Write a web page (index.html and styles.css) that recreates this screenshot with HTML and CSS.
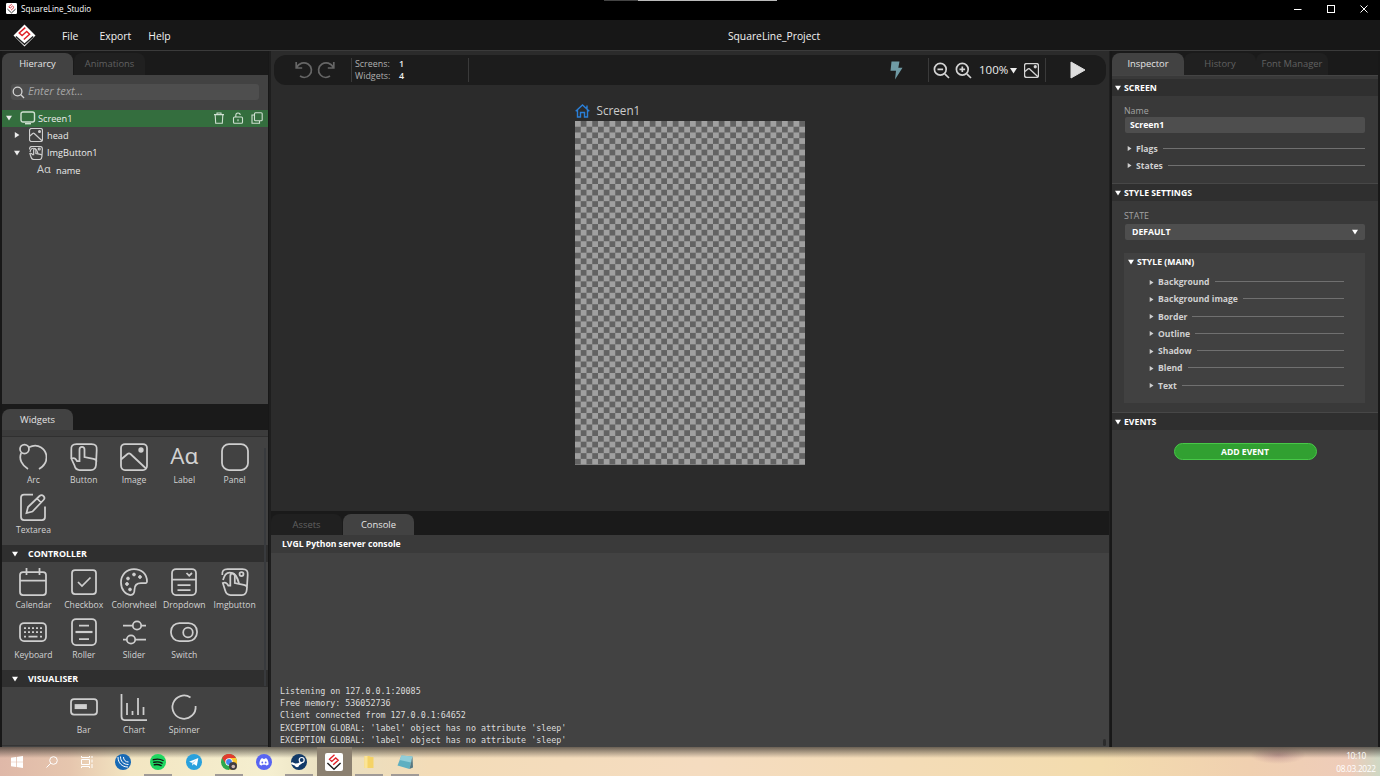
FILE: index.html
```html
<!DOCTYPE html>
<html lang="en">
<head>
  <meta charset="UTF-8" />
  <title>SquareLine_Studio</title>
  <link rel="stylesheet" href="styles.css">
</head>
<body>
  <!-- Shared icons -->
  <svg class="sprite">
    <symbol id="logo" viewBox="0 0 24 24">
      <path d="M12 .5 23.5 12 12 23.5.5 12z" fill="#fff"/>
      <path d="M3 13 12 21.200 21 13" fill="none" stroke="#222" stroke-width="1.500"/>
      <path d="M12.800 3.800 6.500 9.300l3 2.800 4.800-4.300 3 2.800-6 5.500" fill="none" stroke="#e01f26" stroke-width="1.500"/>
    </symbol>
    <symbol id="app" viewBox="0 0 18 18">
      <rect width="18" height="18" rx="2" fill="#fff"/>
      <path d="M2.400 10 9 16.200 15.600 10" fill="none" stroke="#222" stroke-width="1.500"/>
      <path d="M9.500 1.800 4.500 6.200l2.300 2.200 3.900-3.500L13.200 7.200 8.200 11.800" fill="none" stroke="#e01f26" stroke-width="1.400"/>
    </symbol>
    <symbol id="image" viewBox="0 0 28 28">
      <rect x="1" y="1" width="26" height="26" rx="4"/>
      <path d="M1 16.500 7.500 11c1-.8 2-.8 3 0L26 25.500"/>
      <circle cx="21" cy="7" r="1.800" fill="currentColor"/>
    </symbol>
    <symbol id="button" viewBox="0 0 28 28">
      <path d="M1.300 15V7c-.4-4 1.200-6 5.200-6h15c4 0 5.600 2 5.200 6l-.7 15c-.3 3.500-1.700 5-5.200 5H9.500c-3 0-4.300-1.500-5-4.500L1.300 15.500c2.200-1 4.200-.5 5.700 2.500H9.500V6.500c0-3.500 5-3.500 5 0V14l9 1.800c2 .5 3 1 3 2.700"/>
    </symbol>
    <symbol id="imgbutton" viewBox="0 0 28 28">
      <path d="M1.300 7c-.4-4 1.200-6 5.200-6h15c4 0 5.600 2 5.200 6l-.9 14.500c-.3 3.800-1.500 5.500-5 5.500H9.500c-3 0-4.500-1.500-5.300-4.500L1.800 15c2-1 4-.5 5.500 2.500h2V8c0-3.500 4.500-3.500 4.500 0v7l9 1.800c2.500.5 3.300 1 3.300 3"/>
      <path d="M2 12C3 8 5 4.500 8.500 4.500c6 0 8 5 9.500 11"/>
      <circle cx="20.500" cy="6" r="2"/>
    </symbol>
    <symbol id="down" viewBox="0 0 6 6"><path d="M0 .8h6L3 5.600z" fill="currentColor" stroke="none"/></symbol>
    <symbol id="right" viewBox="0 0 6 6"><path d="M.8 0v6L5.400 3z" fill="currentColor" stroke="none"/></symbol>
  </svg>

  <div class="titlebar">
    <svg class="title-logo"><use href="#app"/></svg>
    <span class="title-text">SquareLine_Studio</span>
    <div class="top-strip"></div>
    <div class="window-buttons">
      <svg viewBox="0 0 8 8"><path d="M0 4.500h7.500"/></svg>
      <svg viewBox="0 0 8 8"><rect x=".5" y=".5" width="7" height="7"/></svg>
      <svg viewBox="0 0 8 8"><path d="m.5.5 7 7m0-7-7 7"/></svg>
    </div>
  </div>

  <div class="menubar">
    <svg class="menu-logo"><use href="#logo"/></svg>
    <span class="menu-item file">File</span>
    <span class="menu-item export">Export</span>
    <span class="menu-item">Help</span>
    <span class="project-name">SquareLine_Project</span>
  </div>

  <div class="main">
    <!-- Left column -->
    <div class="left">
      <div class="tabs">
        <div class="tab active">Hierarcy</div>
        <div class="tab">Animations</div>
      </div>
      <div class="panel hierarchy">
        <div class="search">
          <svg class="icon" viewBox="0 0 14 14"><circle cx="6" cy="6" r="4.700"/><path d="m9.500 9.500 3.500 3.500"/></svg>
          <span>Enter text...</span>
        </div>
        <div class="tree">
          <div class="node selected">
            <svg class="arrow"><use href="#down"/></svg>
            <svg class="icon screen-icon" viewBox="0 0 16 14"><rect x="1" y="1" width="13.500" height="10" rx="2"/><path d="M5 12.700h6"/></svg>
            <span>Screen1</span>
            <div class="node-actions">
              <svg viewBox="0 0 12 12"><path d="M1 2.600h10M4 2.500V1h4v1.500M2.200 3l.5 8.200h6.600L9.800 3"/></svg>
              <svg viewBox="0 0 12 12"><rect x="1.500" y="5" width="9" height="6.300" rx="1"/><path d="M3.800 5V3.300c0-3 4.400-3 4.400-.3M6 7.300v2"/></svg>
              <svg viewBox="0 0 12 12"><rect x="3.500" y=".8" width="7.700" height="8" rx="1"/><path d="M3.500 3H1v8.200h7.500V9"/></svg>
            </div>
          </div>
          <div class="node level-1">
            <svg class="arrow"><use href="#right"/></svg>
            <svg class="icon node-icon"><use href="#image"/></svg>
            <span>head</span>
          </div>
          <div class="node level-1">
            <svg class="arrow"><use href="#down"/></svg>
            <svg class="icon node-icon"><use href="#imgbutton"/></svg>
            <span>ImgButton1</span>
          </div>
          <div class="node level-2">
            <span class="node-letters">Aɑ</span>
            <span>name</span>
          </div>
        </div>
      </div>

      <div class="tabs lower-tabs">
        <div class="tab active">Widgets</div>
      </div>
      <div class="panel widgets">
        <div class="widgets-top"></div>
        <div class="widget-grid">
          <div class="widget">
            <svg viewBox="0 0 28 28"><circle cx="5.500" cy="6" r="4.500"/><path d="M10 4.300C19-.5 27.500 6 27.500 14.500c0 5-2.500 8.500-7.500 11.500M2.200 10C-.5 16 3 22.500 9 26"/></svg>
            <span>Arc</span>
          </div>
          <div class="widget"><svg><use href="#button"/></svg><span>Button</span></div>
          <div class="widget"><svg><use href="#image"/></svg><span>Image</span></div>
          <div class="widget"><div class="letters">Aɑ</div><span>Label</span></div>
          <div class="widget">
            <svg viewBox="0 0 28 28"><rect x="1" y="1" width="26" height="26" rx="7"/></svg>
            <span>Panel</span>
          </div>
          <div class="widget">
            <svg viewBox="0 0 28 28"><path d="M14 1.500H5c-2 0-3 1-3 3V24c0 2 1 3 3 3h18c2 0 3-1 3-3V13.500M7.500 20l1.500-6L20.500 3c3-2.500 6.500 1.500 4 4L13.500 18.500zM18 5.500l4.500 4.500"/></svg>
            <span>Textarea</span>
          </div>
        </div>
        <div class="group-title"><svg class="arrow"><use href="#down"/></svg>CONTROLLER</div>
        <div class="widget-grid">
          <div class="widget">
            <svg viewBox="0 0 28 28"><rect x="1" y="4" width="26" height="23" rx="3"/><path d="M1 12.500h26M7.500 0v7M20.500 0v7"/></svg>
            <span>Calendar</span>
          </div>
          <div class="widget">
            <svg viewBox="0 0 28 28"><rect x="2" y="2" width="24" height="24" rx="3"/><path d="m8 14 4 4 8.500-8.500"/></svg>
            <span>Checkbox</span>
          </div>
          <div class="widget">
            <svg viewBox="0 0 28 28"><path d="M27 13.500C27 6 21.500 1 14 1S1 7 1 14.500 6 27 10.500 27c3.500 0 4-3 4-5.500 0-4 2.500-6.500 6.500-6.500 3 0 6 1 6-1.500z"/><g fill="currentColor" stroke-width="1"><circle cx="8" cy="10.500" r="1.400"/><circle cx="14" cy="6.500" r="1.400"/><circle cx="20" cy="9" r="1.400"/><circle cx="7" cy="16" r="1.400"/><circle cx="10" cy="21.500" r="1.400"/></g></svg>
            <span>Colorwheel</span>
          </div>
          <div class="widget">
            <svg viewBox="0 0 28 28"><rect x="2" y="1" width="24" height="26" rx="4"/><path d="M2 11.500h24M16.500 5l2.700 2.700L22 5M7.500 17h13M7.500 22h13"/></svg>
            <span>Dropdown</span>
          </div>
          <div class="widget"><svg><use href="#imgbutton"/></svg><span>Imgbutton</span></div>
          <div class="widget">
            <svg viewBox="0 0 28 28"><rect x="1" y="5" width="26" height="18" rx="4"/><path d="M5 10h18M5 14h18" stroke-dasharray="2 2"/><path d="M5 18.500h2M21 18.500h2M9.500 18.500h9"/></svg>
            <span>Keyboard</span>
          </div>
          <div class="widget">
            <svg viewBox="0 0 28 28"><rect x="2" y="1" width="24" height="26" rx="4"/><path d="M9 7.500h10M9 21h10"/><path d="M5.500 14h17" stroke-width="2.200"/></svg>
            <span>Roller</span>
          </div>
          <div class="widget">
            <svg viewBox="0 0 28 28"><circle cx="17" cy="7.500" r="4.200"/><circle cx="11" cy="21.500" r="4.200"/><path d="M3 7.500h9.800M21.200 7.500H26M3 21.500h3.800M15.200 21.500H26"/></svg>
            <span>Slider</span>
          </div>
          <div class="widget">
            <svg viewBox="0 0 28 28"><rect x="1" y="5" width="26" height="18" rx="8.500"/><circle cx="18" cy="14.500" r="4.800"/></svg>
            <span>Switch</span>
          </div>
        </div>
        <div class="group-title"><svg class="arrow"><use href="#down"/></svg>VISUALISER</div>
        <div class="widget-grid last">
          <div class="widget col-2">
            <svg viewBox="0 0 28 28"><rect x="1" y="6" width="26" height="15.500" rx="3"/><rect x="5.500" y="12" width="10.500" height="3.200" fill="currentColor"/></svg>
            <span>Bar</span>
          </div>
          <div class="widget">
            <svg viewBox="0 0 28 28"><path d="M1.500 1v22.500c0 2.500 1 3.500 3 3.500H27M7 10v12M12.500 18v4M18 5v17M23.500 14v8"/></svg>
            <span>Chart</span>
          </div>
          <div class="widget">
            <svg viewBox="0 0 28 28"><path d="M20.500 4.500A11.600 11.600 0 1 0 25.600 13"/></svg>
            <span>Spinner</span>
          </div>
        </div>
        <div class="scroll"></div>
      </div>
    </div>

    <!-- Workspace -->
    <div class="center">
      <div class="workspace">
        <div class="toolbar">
          <svg class="undo" viewBox="0 0 18 18"><path d="M1.200 1v6h6M1.500 6.500C4 2 9 .5 13 3c4 2.500 4.500 8 1.500 11-2.500 2.700-6.500 3-9.500 1"/></svg>
          <svg class="undo" viewBox="0 0 18 18"><path d="M16.800 1v6h-6M16.500 6.500C14 2 9 .5 5 3 1 5.500.5 11 3.500 14c2.500 2.700 6.500 3 9.500 1"/></svg>
          <div class="stats">
            <span>Screens:</span><b>1</b>
            <span>Widgets:</span><b>4</b>
          </div>
          <div class="toolbar-right">
            <svg class="bolt" viewBox="0 0 13 19"><path d="M1.500.5h8L8.300 6.700h4.200L5 18.500l1-8.700H.5z"/></svg>
            <div class="zoom-tools">
              <svg viewBox="0 0 17 17"><circle cx="7.300" cy="7.300" r="5.900"/><path d="m11.800 11.800 4.200 4.200M4.500 7.300h5.600"/></svg>
              <svg viewBox="0 0 17 17"><circle cx="7.300" cy="7.300" r="5.900"/><path d="m11.800 11.800 4.200 4.200M4.500 7.300h5.600M7.300 4.500v5.600"/></svg>
              <span class="percent">100%</span>
              <svg class="zoom-arrow"><use href="#down"/></svg>
              <svg class="fit icon"><use href="#image"/></svg>
            </div>
            <svg class="play" viewBox="0 0 16 18"><path d="M1 1v16l14-8z"/></svg>
          </div>
        </div>
        <div class="screen">
          <div class="screen-title">
            <svg viewBox="0 0 15 14"><path d="M.7 7.200 7.500 1l6.800 6.200M2.500 6v7h3V8.500h4V13h3V6M12 4.500V1.500"/></svg>
            <span>Screen1</span>
          </div>
          <div class="canvas"></div>
        </div>
      </div>
      <div class="tabs console-tabs">
        <div class="tab">Assets</div>
        <div class="tab active">Console</div>
      </div>
      <div class="console-title">LVGL Python server console</div>
      <div class="console">
        <div>Listening on 127.0.0.1:20085</div>
        <div>Free memory: 536052736</div>
        <div>Client connected from 127.0.0.1:64652</div>
        <div>EXCEPTION GLOBAL: 'label' object has no attribute 'sleep'</div>
        <div>EXCEPTION GLOBAL: 'label' object has no attribute 'sleep'</div>
        <div class="console-grip"></div>
      </div>
    </div>

    <!-- Inspector -->
    <div class="inspector">
      <div class="tabs">
        <div class="tab active">Inspector</div>
        <div class="tab">History</div>
        <div class="tab">Font Manager</div>
      </div>
      <div class="inspector-body">
        <div class="section-title first"><svg class="arrow"><use href="#down"/></svg>SCREEN</div>
        <div class="section screen-section">
          <label>Name</label>
          <div class="field">Screen1</div>
          <div class="fold"><svg class="arrow"><use href="#right"/></svg>Flags<i></i></div>
          <div class="fold"><svg class="arrow"><use href="#right"/></svg>States<i></i></div>
        </div>
        <div class="section-title"><svg class="arrow"><use href="#down"/></svg>STYLE SETTINGS</div>
        <div class="section style-section">
          <label>STATE</label>
          <div class="field select">DEFAULT<svg class="arrow"><use href="#down"/></svg></div>
          <div class="style-box">
            <div class="style-title"><svg class="arrow"><use href="#down"/></svg>STYLE (MAIN)</div>
            <div class="fold"><svg class="arrow"><use href="#right"/></svg>Background<i></i></div>
            <div class="fold"><svg class="arrow"><use href="#right"/></svg>Background image<i></i></div>
            <div class="fold"><svg class="arrow"><use href="#right"/></svg>Border<i></i></div>
            <div class="fold"><svg class="arrow"><use href="#right"/></svg>Outline<i></i></div>
            <div class="fold"><svg class="arrow"><use href="#right"/></svg>Shadow<i></i></div>
            <div class="fold"><svg class="arrow"><use href="#right"/></svg>Blend<i></i></div>
            <div class="fold"><svg class="arrow"><use href="#right"/></svg>Text<i></i></div>
          </div>
        </div>
        <div class="section-title"><svg class="arrow"><use href="#down"/></svg>EVENTS</div>
        <button class="add-event">ADD EVENT</button>
      </div>
    </div>
  </div>

  <div class="taskbar">
    <div class="task"><svg class="windows" viewBox="0 0 12 12"><path d="M0 1.700 5 1v4.700H0zM5.700.9 12 0v5.700H5.700zM0 6.300h5V11l-5-.7zM5.700 6.300H12V12l-6.300-.9z" fill="#fff"/></svg></div>
    <div class="task"><svg class="line" viewBox="0 0 12 12"><circle cx="7.500" cy="4.500" r="3.800"/><path d="M4.700 7.300.5 11.500"/></svg></div>
    <div class="task"><svg class="line" viewBox="0 0 12 12"><path d="M.5 0v1.500h8V0M.5 12v-1.500h8V12M.5 3.500h8v5h-8zM11 0v2M11 3.500v3M11 8v4"/></svg></div>
    <div class="task">
      <svg viewBox="0 0 16 16"><circle cx="8" cy="8" r="8" fill="#1769b5"/><path d="M3 3c0 6 4 10 10 10M5.500 2.500c0 5 3 8 8 8M8.500 3c0 3 2 5 5 5" fill="none" stroke="#fff" stroke-width="1"/></svg>
    </div>
    <div class="task open">
      <svg viewBox="0 0 16 16"><circle cx="8" cy="8" r="8" fill="#1ed760"/><path d="M3.300 5.700c3.500-1 7-.7 9.800.8M3.800 8.300c3-.8 6-.5 8.300.8M4.300 10.800c2.500-.6 4.700-.4 6.800.8" fill="none" stroke="#111" stroke-width="1.400" stroke-linecap="round"/></svg>
    </div>
    <div class="task">
      <svg viewBox="0 0 16 16"><circle cx="8" cy="8" r="8" fill="#2aa1dd"/><path d="m3 7.800 9.300-3.700-1.500 8-3-2.200-1.500 1.500-.4-2.600z" fill="#fff"/><path d="m5.900 8.800 4.600-3-3.300 3.700-.9 1.800z" fill="#b5d8ee"/></svg>
    </div>
    <div class="task open">
      <svg viewBox="0 0 16 16"><circle cx="8" cy="8" r="8" fill="#2da94f"/><path d="M1 4a8 8 0 0 1 14 0z" fill="#e33b2e"/><path d="M1 4 5 10l3-6z" fill="#e33b2e"/><path d="M8 4h7a8 8 0 0 1-7 12l3.500-6z" fill="#fcc934"/><circle cx="8" cy="8" r="3.700" fill="#fff"/><circle cx="8" cy="8" r="2.900" fill="#4285f4"/><circle cx="12" cy="12" r="4" fill="#413d42"/><circle cx="12.300" cy="12.500" r="1.800" fill="#cdb8b3"/></svg>
    </div>
    <div class="task">
      <svg viewBox="0 0 16 16"><circle cx="8" cy="8" r="8" fill="#5865f2"/><path d="M5.200 4.500 7 4.200l.4.700h1.200l.4-.7 1.800.3c1.300 1.700 1.900 3.700 1.700 5.900-.8.700-1.600 1-2.300 1.200l-.6-.9H6.400l-.6.900c-.8-.2-1.600-.6-2.300-1.200-.2-2.200.4-4.200 1.700-5.900z" fill="#fff"/><circle cx="6.300" cy="8.500" r=".9" fill="#5865f2"/><circle cx="9.700" cy="8.500" r=".9" fill="#5865f2"/></svg>
    </div>
    <div class="task open">
      <svg viewBox="0 0 16 16"><circle cx="8" cy="8" r="8" fill="#123a68"/><path d="M.3 9 6 11.500l4.500-3.300" fill="none" stroke="#fff" stroke-width="2.300"/><circle cx="6" cy="11.300" r="2" fill="#fff"/><circle cx="10.700" cy="6" r="2.500" fill="#123a68" stroke="#fff" stroke-width="1.200"/></svg>
    </div>
    <div class="task current"><svg class="app-icon"><use href="#app"/></svg></div>
    <div class="task open"><svg viewBox="0 0 16 16"><path d="M3.500 2h5l1 1h3v11h-9z" fill="#f5d366"/><path d="M3.500 2h3v12h-3z" fill="#fbe497"/></svg></div>
    <div class="task open"><svg viewBox="0 0 16 16"><path d="m4.500 1.500 11 1-3 12.500-12-3.500z" fill="#5eafc1"/><path d="m4.500 1.500 11 1-1.500 6L2.500 6z" fill="#91ced9"/><path d="m15.500 2.500.5 11-3.500 1.500z" fill="#567984"/></svg></div>
    <div class="clock"><span>10:10</span><span>08.03.2022</span></div>
  </div>
</body>
</html>
```
FILE: styles.css
```css
* {
  box-sizing: border-box;
}

body {
  margin: 0;
  width: 1380px;
  height: 776px;
  overflow: hidden;
  display: flex;
  flex-direction: column;
  background: #171717;
  color: #ececec;
  font-family: "Open Sans", "Noto Sans", sans-serif;
  font-size: 9.4px;
  white-space: nowrap;
}

svg {
  display: block;
  flex: none;
}

.sprite {
  position: absolute;
  width: 0;
  height: 0;
}

.icon {
  fill: none;
  stroke: currentColor;
  stroke-width: 1.4;
}

.arrow {
  width: 6px;
  height: 6px;
}

/* Window title */
.titlebar {
  position: relative;
  height: 20px;
  flex: none;
  display: flex;
  align-items: center;
  padding: 0 12px 3px 6px;
  background: #000;
}

.title-logo {
  width: 11px;
  height: 11px;
}

.title-text {
  margin-left: 4px;
  font-size: 8.1px;
  color: #fff;
}

.top-strip {
  position: absolute;
  left: 604px;
  top: 0;
  width: 173px;
  height: 1px;
  background: linear-gradient(90deg, #444 34px, #bbb 34px);
}

.window-buttons {
  display: flex;
  gap: 25px;
  margin-left: auto;
}

.window-buttons svg {
  width: 8px;
  height: 8px;
  fill: none;
  stroke: #fff;
  stroke-width: 1;
}

/* Menu */
.menubar {
  position: relative;
  height: 31px;
  flex: none;
  display: flex;
  align-items: center;
  padding-left: 13px;
  background: #171717;
  border-bottom: 1px solid #3b3b3b;
  font-size: 10.4px;
  color: #f2f2f2;
}

.menu-logo {
  width: 23px;
  height: 23px;
}

.menu-item {
  margin-right: 17px;
  padding-top: 1px;
}

.menu-item.file {
  margin-left: 26px;
  margin-right: 21px;
}

.project-name {
  position: absolute;
  left: 674px;
  width: 200px;
  padding-top: 1px;
  text-align: center;
  font-size: 10.3px;
}

.main {
  flex: none;
  height: 696px;
  display: flex;
  background: #181818;
}

/* Tabs */
.tabs {
  flex: none;
  height: 24px;
  display: flex;
  align-items: flex-end;
  gap: 1px;
  background: #1a1a1a;
}

.tab {
  width: 71px;
  height: 22px;
  line-height: 22px;
  border-radius: 8px 8px 0 0;
  background: #202020;
  color: #606060;
  text-align: center;
}

.tab.active {
  background: #424242;
  color: #e4e4e4;
}

/* Left column */
.left {
  width: 268px;
  padding-left: 2px;
  flex: none;
  display: flex;
  flex-direction: column;
}

.panel {
  background: #424242;
}

.hierarchy {
  height: 329px;
  flex: none;
  padding-top: 9px;
}

.search {
  width: 248px;
  height: 16px;
  margin-left: 9px;
  padding-left: 1px;
  display: flex;
  align-items: center;
  gap: 3px;
  background: #4e4e4e;
  border-radius: 3px;
  color: #a5a5a5;
  font-size: 11.1px;
  font-style: italic;
}

.search span {
  padding-bottom: 3px;
}

.search .icon {
  width: 13px;
  height: 13px;
  color: #d4d4d4;
}

.tree {
  margin-top: 9.500px;
}

.node {
  height: 17.3px;
  display: flex;
  align-items: center;
  padding-left: 4px;
  font-size: 9.2px;
}

.node.selected {
  background: #346e3e;
}

.screen-icon {
  width: 16px;
  height: 14px;
  margin: 0 2px 0 8px;
  color: #cfe0d1;
}

.level-1 {
  padding-left: 12px;
}

.level-2 {
  padding-left: 35px;
}

.node-icon {
  width: 14px;
  height: 14px;
  margin: 0 4px 0 9px;
  stroke-width: 2.4;
  color: #cfcfcf;
}

.node-letters {
  width: 19px;
  font-size: 11px;
  line-height: 14px;
  padding-bottom: 2px;
  color: #cfcfcf;
}

.node-actions {
  display: flex;
  gap: 7px;
  margin-left: auto;
  padding-right: 5px;
}

.node-actions svg {
  width: 12px;
  height: 12px;
  fill: none;
  stroke: #cfe0d1;
  stroke-width: 1.1;
}

/* Widgets */
.lower-tabs {
  height: 26px;
}

.lower-tabs .tab {
  height: 21px;
}

.widgets {
  position: relative;
  flex: 1;
  min-height: 0;
  overflow: hidden;
}

.widgets-top {
  height: 7px;
  background: #3c3c3c;
  border-bottom: 1px solid #303030;
}

.widget-grid {
  display: grid;
  grid-template-columns: repeat(5, 50.3px);
  grid-auto-rows: 50.3px;
  padding: 6px 0 0 6.3px;
  height: 108px;
}

.widget-grid.last {
  height: 59px;
  border-bottom: 1px solid #353535;
}

.widget {
  display: flex;
  flex-direction: column;
  align-items: center;
  color: #d2d2d2;
  font-size: 8.6px;
  line-height: 12px;
}

.widget svg {
  width: 28px;
  height: 28px;
  margin-bottom: 3px;
  fill: none;
  stroke: #cecece;
  stroke-width: 1.75;
}

.letters {
  height: 31px;
  line-height: 26px;
  font-size: 22.500px;
}

.col-2 {
  grid-column: 2;
}

.group-title {
  height: 17px;
  display: flex;
  align-items: center;
  gap: 10px;
  padding-left: 10px;
  background: #2f2f2f;
  font-size: 8.9px;
  font-weight: 700;
  color: #fff;
}

.scroll {
  position: absolute;
  right: 2px;
  top: 18px;
  width: 2px;
  height: 238px;
  background: #383a3d;
}

/* Workspace */
.center {
  width: 841px;
  margin-left: 1px;
  flex: none;
  display: flex;
  flex-direction: column;
  background: #424242;
  border-left: 2px solid #1e1e1e;
  border-right: 1px solid #202020;
}

.workspace {
  height: 460px;
  flex: none;
  padding: 4px 3px 0 2px;
  background: #2b2b2b;
}

.toolbar {
  height: 30px;
  display: flex;
  align-items: center;
  padding-left: 21px;
  margin-left: 1px;
  background: #1c1c1c;
  border-radius: 12px;
}

.undo {
  width: 18px;
  height: 18px;
  margin-right: 4px;
  fill: none;
  stroke: #666;
  stroke-width: 1.7;
}

.stats {
  width: 118px;
  height: 24px;
  margin-left: 12px;
  padding-left: 3px;
  display: grid;
  grid-template-columns: 44px 1fr;
  align-content: center;
  line-height: 12px;
  border-left: 1px solid #3a3a3a;
  border-right: 1px solid #3a3a3a;
  font-size: 8.9px;
  color: #b0b0b0;
}

.stats b {
  font-weight: 600;
  color: #eee;
}

.toolbar-right {
  display: flex;
  align-items: center;
  margin-left: auto;
}

.bolt {
  width: 13px;
  height: 19px;
  margin-right: 25px;
  fill: #6f9ba5;
}

.zoom-tools {
  height: 24px;
  width: 118px;
  display: flex;
  align-items: center;
  gap: 5px;
  padding-left: 4px;
  border-left: 1px solid #3a3a3a;
  border-right: 1px solid #3a3a3a;
}

.zoom-tools svg {
  width: 17px;
  height: 17px;
  fill: none;
  stroke: #d4d4d4;
  stroke-width: 1.7;
}

.percent {
  margin-left: 2px;
  padding-bottom: 1px;
  font-size: 11.5px;
}

.zoom-tools .zoom-arrow {
  width: 7px;
  height: 7px;
  margin-left: -3px;
}

.zoom-tools .fit {
  width: 15px;
  height: 15px;
  margin-left: 2px;
  stroke-width: 2.5;
}

.play {
  width: 16px;
  height: 18px;
  margin: 0 20px 0 24px;
  fill: #ddd;
  stroke: #ddd;
  stroke-width: 1;
  stroke-linejoin: round;
}

.screen {
  width: 230px;
  margin: 18px 0 0 302px;
}

.screen-title {
  height: 18px;
  display: flex;
  align-items: center;
  gap: 6.5px;
  padding-bottom: 3px;
  font-size: 11.7px;
  line-height: 15px;
  color: #ccc;
}

.screen-title svg {
  width: 15px;
  height: 14px;
  fill: none;
  stroke: #2a7fd8;
  stroke-width: 1.4;
}

.canvas {
  height: 344px;
  background: repeating-conic-gradient(#636363 0 25%, #a0a0a0 0 50%) 0 0 / 11.500px 11.467px;
}

/* Console */
.console-tabs .tab {
  height: 21px;
}

.console-title {
  height: 18px;
  flex: none;
  padding-left: 11px;
  line-height: 19px;
  background: #3a3a3a;
  font-size: 8.6px;
  font-weight: 700;
  color: #fff;
}

.console {
  position: relative;
  flex: 1;
  display: flex;
  flex-direction: column;
  justify-content: flex-end;
  padding: 0 0 1px 9px;
  font-family: "DejaVu Sans Mono", monospace;
  font-size: 8.36px;
  line-height: 12.2px;
  color: #ddd;
}

.console-grip {
  position: absolute;
  right: 3px;
  bottom: 1px;
  width: 3px;
  height: 7px;
  border-radius: 2px;
  background: #2c2c2c;
}

/* Inspector */
.inspector {
  flex: 1;
  display: flex;
  flex-direction: column;
  padding: 0 2px 0 2px;
}

.inspector .tab {
  width: 72px;
}

.inspector .tabs {
  gap: 0;
}

.inspector-body {
  flex: 1;
  display: flex;
  flex-direction: column;
  background: #393939;
  border-top: 1px solid #444;
}

.section-title {
  height: 18px;
  flex: none;
  display: flex;
  align-items: center;
  gap: 3px;
  padding-left: 3px;
  background: #2f2f2f;
  border-top: 1px solid #474747;
  font-size: 8.7px;
  font-weight: 700;
  color: #fff;
}

.section-title.first {
  height: 17px;
  margin-top: 3px;
  border-top: 0;
}

.section {
  padding: 0 13px 0 12px;
}

.section label {
  display: block;
  height: 12px;
  line-height: 13px;
  font-size: 8.8px;
  color: #a3a3a3;
}

.screen-section {
  height: 87px;
  padding-top: 9px;
}

.style-section {
  height: 211px;
  padding-top: 9px;
}

.field {
  height: 16px;
  line-height: 16px;
  margin: 0 0 0 1px;
  padding-left: 5px;
  background: #4e4e4e;
  border-radius: 2px;
  font-size: 8.7px;
  font-weight: 700;
  color: #fff;
}

.screen-section .field {
  margin-bottom: 7px;
}

.select {
  display: flex;
  align-items: center;
  justify-content: space-between;
  margin-top: 2px;
  padding: 0 7px 0 7px;
}

.fold {
  height: 17.25px;
  display: flex;
  align-items: center;
  padding-left: 3px;
  font-size: 8.6px;
  font-weight: 700;
  color: #d0d0d0;
}

.fold .arrow {
  width: 5px;
  height: 5px;
  margin-right: 4px;
}

.fold i {
  flex: 1;
  height: 1px;
  margin: 0 0 1px 5px;
  background: #707070;
}

.style-box {
  height: 150px;
  margin-top: 13px;
  padding: 0 21px 0 22px;
  background: #414141;
}

.style-title {
  height: 18px;
  display: flex;
  align-items: center;
  gap: 3px;
  margin-left: -18px;
  margin-bottom: 2.500px;
  font-size: 8.7px;
  font-weight: 700;
  color: #fff;
}

.add-event {
  width: 143px;
  height: 17px;
  margin: 13px auto 0;
  padding: 0;
  flex: none;
  background: #31a031;
  border: 1px solid #48c848;
  border-radius: 9px;
  font: 700 8.6px/16px "Open Sans", sans-serif;
  color: #fff;
}

/* Taskbar */
.taskbar {
  flex: none;
  height: 29px;
  display: flex;
  background:
    linear-gradient(180deg, rgba(60, 55, 50, 0.75), rgba(90, 80, 70, 0) 11px),
    radial-gradient(ellipse 28px 9px at 1278px 8px, rgba(140, 90, 110, 0.4), transparent),
    linear-gradient(90deg, #dfb8a8 0, #e6c6ae 70px, #f3e6c2 130px, #f5efd0 270px, #e9dfc0 330px, #f3dcb8 430px, #f5dcc0 700px, #f3dcae 1100px, #f0d0b0 1250px, #eeccba 1350px, #cfd8c4 1380px);
}

.task {
  width: 35.2px;
  flex: none;
  display: flex;
  align-items: center;
  justify-content: center;
}

.task svg {
  width: 16px;
  height: 16px;
}

.task .windows,
.task .line {
  width: 12px;
  height: 12px;
  margin-right: 2px;
}

.task .line {
  fill: none;
  stroke: #fff;
  stroke-width: 1;
}

.task.open {
  background: linear-gradient(#a09a96, #a09a96) center bottom / 28px 2px no-repeat;
}

.task.current {
  background: #8b8070;
}

.task .app-icon {
  width: 18px;
  height: 18px;
}

.clock {
  margin-left: auto;
  width: 48px;
  padding-top: 2px;
  display: flex;
  flex-direction: column;
  align-items: center;
  font-size: 8.3px;
  line-height: 13px;
  letter-spacing: -0.3px;
  color: #fff;
}
```
